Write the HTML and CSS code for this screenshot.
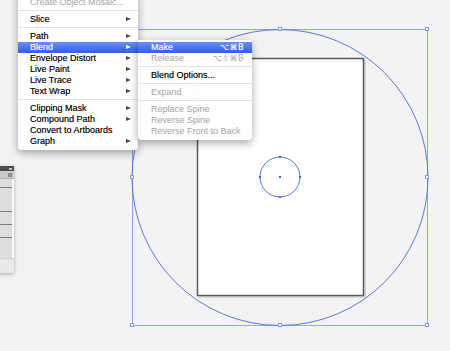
FILE: index.html
```html
<!DOCTYPE html>
<html lang="en">
<head>
    <meta charset="UTF-8">
    <title>Blend menu</title>
    <link rel="stylesheet" href="styles.css">
</head>
<body>

    <div id="stage">
        <!-- artwork on the canvas -->
        <svg class="art" width="450" height="351" viewBox="0 0 450 351">
            <rect x="199" y="60" width="167" height="238" fill="#d8d8d8"/>
            <rect x="197.5" y="58.5" width="166" height="237" fill="#fff" stroke="#5a5a5a" stroke-width="1.5"/>

            <rect x="132.5" y="29.5" width="295" height="296" fill="none" stroke="#8ea6f2" stroke-width="1"/>
            <circle cx="280" cy="177.5" r="148" fill="none" stroke="#5c78d6" stroke-width="1"/>

            <g fill="#fff" stroke="#7f9aee" stroke-width="1">
                <rect x="278.5" y="27.5" width="3" height="3"/>
                <rect x="425.5" y="27.5" width="3" height="3"/>
                <rect x="130.5" y="175.5" width="3" height="3"/>
                <rect x="425.5" y="175.5" width="3" height="3"/>
                <rect x="130.5" y="323.5" width="3" height="3"/>
                <rect x="278.5" y="323.5" width="3" height="3"/>
                <rect x="425.5" y="323.5" width="3" height="3"/>
            </g>

            <circle cx="280" cy="177" r="20" fill="none" stroke="#5c78d6" stroke-width="1"/>
            <g fill="#3f63e0">
                <rect x="279" y="156" width="2" height="2"/>
                <rect x="279" y="196" width="2" height="2"/>
                <rect x="259" y="176" width="2" height="2"/>
                <rect x="299" y="176" width="2" height="2"/>
                <rect x="279" y="176" width="2" height="2"/>
            </g>
        </svg>

        <!-- docked panel, mostly off screen -->
        <div class="panel">
            <div class="panel-title"><span class="grip"></span></div>
            <div class="panel-head"><span class="menu-btn"></span></div>
            <div class="panel-body">
                <div class="panel-row"></div>
                <div class="panel-row tall"></div>
                <div class="panel-row short"></div>
                <div class="panel-row short"></div>
            </div>
            <div class="panel-foot"></div>
        </div>

        <!-- Object menu -->
        <div class="menu main-menu">
            <div class="item off">Create Object Mosaic...</div>
            <div class="sep"></div>
            <div class="item sub">Slice</div>
            <div class="sep"></div>
            <div class="item sub">Path</div>
            <div class="item sub active">Blend</div>
            <div class="item sub">Envelope Distort</div>
            <div class="item sub">Live Paint</div>
            <div class="item sub">Live Trace</div>
            <div class="item sub">Text Wrap</div>
            <div class="sep"></div>
            <div class="item sub">Clipping Mask</div>
            <div class="item sub">Compound Path</div>
            <div class="item">Convert to Artboards</div>
            <div class="item sub">Graph</div>
        </div>

        <!-- Blend submenu -->
        <div class="menu sub-menu">
            <div class="item active">Make<span class="key">⌥⌘B</span></div>
            <div class="item off">Release<span class="key">⌥⇧⌘B</span></div>
            <div class="sep"></div>
            <div class="item">Blend Options...</div>
            <div class="sep"></div>
            <div class="item off">Expand</div>
            <div class="sep"></div>
            <div class="item off">Replace Spine</div>
            <div class="item off">Reverse Spine</div>
            <div class="item off">Reverse Front to Back</div>
        </div>
    </div>

</body>
</html>
```

FILE: styles.css
```css
body {
    margin: 0;
    padding: 0;
    background: #f3f3f3;
    font-family: "Liberation Sans", "DejaVu Sans", sans-serif;
}

#stage {
    position: relative;
    width: 450px;
    height: 351px;
    overflow: hidden;
    background: #f3f3f3;
}

.art {
    display: block;
}

/* menus */
.menu {
    position: absolute;
    background: rgba(255, 255, 255, 0.97);
    box-shadow: 0 3px 9px rgba(0, 0, 0, 0.35);
    font-size: 9px;
    color: #0c0c0c;
}
.main-menu {
    left: 18px;
    top: -7px;
    width: 120px;
    padding: 4px 0 3px;
    border-radius: 0 0 4px 4px;
}
.sub-menu {
    left: 138px;
    top: 40px;
    width: 114px;
    padding: 2px 0 3px;
    border-radius: 0 4px 4px 4px;
}

.item {
    position: relative;
    height: 11px;
    line-height: 11px;
    padding-left: 12px;
    white-space: nowrap;
    text-shadow: 0 0 0.4px rgba(0, 0, 0, 0.6);
}
.sub-menu .item {
    padding-left: 13px;
}
.item.off {
    color: #a3a3a3;
    text-shadow: none;
}
.item.active {
    color: #fff;
    background: linear-gradient(#6b8ff4, #2f5fe6);
    text-shadow: 0 0 0.4px rgba(255, 255, 255, 0.6);
}

/* little submenu arrow */
.item.sub::after {
    content: "";
    position: absolute;
    right: 7px;
    top: 3px;
    border-left: 5px solid #4a4a4a;
    border-top: 2.5px solid transparent;
    border-bottom: 2.5px solid transparent;
}
.item.sub.active::after {
    border-left-color: #fff;
}

.key {
    position: absolute;
    right: 8px;
    top: 0;
    font-family: "DejaVu Sans", sans-serif;
    font-size: 8px;
    letter-spacing: 0.5px;
}

.sep {
    height: 1px;
    margin: 2px 0 3px;
    background: #e2e2e2;
}

/* panel at the left edge */
.panel {
    position: absolute;
    left: -30px;
    top: 166px;
    width: 44px;
    height: 107px;
    display: flex;
    flex-direction: column;
    background: #dedede;
    box-shadow: 0 1px 4px rgba(0, 0, 0, 0.3);
}
.panel-title {
    height: 5px;
    background: #4c4c4c;
    display: flex;
    justify-content: flex-end;
    align-items: center;
    padding-right: 2px;
}
.grip {
    width: 3px;
    height: 2px;
    background: #bdbdbd;
}
.panel-head {
    height: 7px;
    background: #c9c9c9;
    border-bottom: 1px solid #b5b5b5;
    display: flex;
    justify-content: flex-end;
    align-items: center;
    padding-right: 2px;
}
.menu-btn {
    width: 4px;
    height: 4px;
    background: #8c8c8c;
}
.panel-body {
    flex: 1;
    border-right: 2px solid #fafafa;
    display: flex;
    flex-direction: column;
}
.panel-row {
    height: 8px;
    border-bottom: 1px solid #7d7d7d;
}
.panel-row.tall {
    height: 23px;
}
.panel-row.short {
    height: 12px;
}
.panel-foot {
    height: 14px;
    background: #e9e9e9;
    border-top: 1px solid #cfcfcf;
}
```
